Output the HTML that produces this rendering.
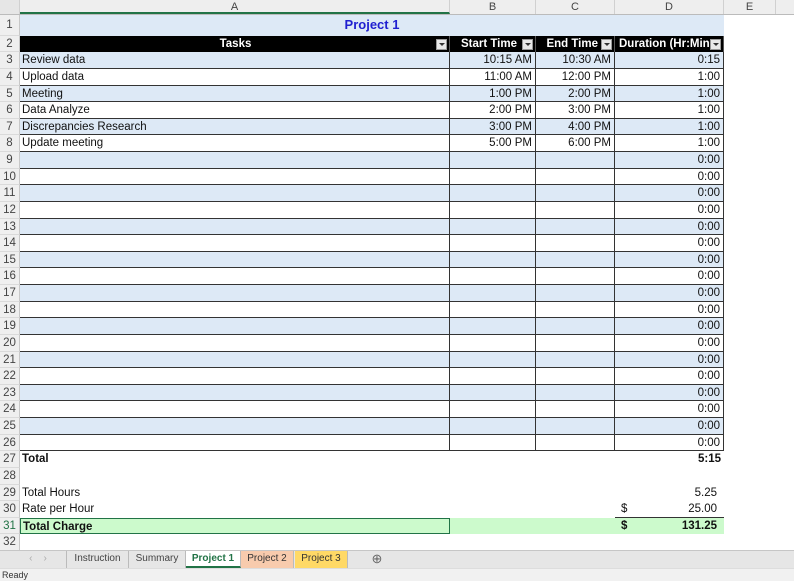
<!DOCTYPE html>
<html><head><style>
*{box-sizing:border-box;margin:0;padding:0}
body{width:794px;height:581px;overflow:hidden;background:#fff;font-family:"Liberation Sans",sans-serif;font-size:11.5px;color:#111;position:relative}
.r{display:flex;height:16.64px;line-height:16px}
.r>div{flex:none;overflow:hidden;white-space:nowrap}
.h{width:20px;background:#efefef;color:#444;text-align:center;border-right:1px solid #c8c8c8;border-bottom:1px solid #dadada;font-size:11.5px}
.a{width:430px;padding-left:2px}
.b{width:86px;text-align:right;padding-right:3px}
.c{width:79px;text-align:right;padding-right:3px}
.d{width:109px;text-align:right;padding-right:3px}
.e{width:52px}
.d2 .a,.d2 .b,.d2 .c,.d2 .d{border-right:1px solid #333;border-bottom:1px solid #333}
.bl .a,.bl .b,.bl .c,.bl .d{background:#dde9f6}
.hdr{height:15px;line-height:15px;background:#eeeeee;color:#444;text-align:center;border-bottom:1px solid #bbb;font-size:11px}
.hdr>div{border-right:1px solid #d0d0d0;text-align:center;padding:0}
.t2 .a,.t2 .b,.t2 .c,.t2 .d{background:#000;color:#fff;font-weight:bold;position:relative;border-right:1px solid #555}
.dd{position:absolute;right:2px;top:3px;width:11px;height:11px;background:#e8e8e8;border:1px solid #999}
.dd:after{content:"";position:absolute;left:2px;top:3px;border-left:3px solid transparent;border-right:3px solid transparent;border-top:3px solid #333}
.tabs{position:absolute;left:0;top:550px;width:794px;height:18px;background:#e6e6e6;border-top:1px solid #c6c6c6}
.tab{position:absolute;top:0;height:17px;line-height:16px;font-size:10px;color:#444;text-align:center;border-right:1px solid #bbb}
.status{position:absolute;left:0;top:568px;width:794px;height:13px;background:#f1f1f1;font-size:9px;color:#333;padding-left:2px;line-height:13px;border-top:1px solid #ddd}
</style></head><body>
<div class="r hdr"><div class="h" style="background:#e6e6e6;border-bottom:none"></div><div class="a" style="border-bottom:2px solid #217346;color:#444">A</div><div class="b">B</div><div class="c">C</div><div class="d">D</div><div class="e">E</div></div>
<div class="r" style="height:20.7px;line-height:20px"><div class="h">1</div><div style="width:704px;background:#dde9f6;text-align:center;color:#1f1fd0;font-weight:bold;font-size:13px">Project 1</div></div>
<div class="r t2" style="line-height:16px"><div class="h">2</div><div class="a" style="text-align:center">Tasks<span class="dd"></span></div><div class="b" style="padding-right:18px">Start Time<span class="dd"></span></div><div class="c" style="padding-right:16px">End Time<span class="dd"></span></div><div class="d" style="padding-right:14px;text-align:left;padding-left:4px">Duration (Hr:Min<span class="dd"></span></div></div>
<div class="r d2 bl"><div class="h">3</div><div class="a">Review data</div><div class="b">10:15 AM</div><div class="c">10:30 AM</div><div class="d">0:15</div></div>
<div class="r d2"><div class="h">4</div><div class="a">Upload data</div><div class="b">11:00 AM</div><div class="c">12:00 PM</div><div class="d">1:00</div></div>
<div class="r d2 bl"><div class="h">5</div><div class="a">Meeting</div><div class="b">1:00 PM</div><div class="c">2:00 PM</div><div class="d">1:00</div></div>
<div class="r d2"><div class="h">6</div><div class="a">Data Analyze</div><div class="b">2:00 PM</div><div class="c">3:00 PM</div><div class="d">1:00</div></div>
<div class="r d2 bl"><div class="h">7</div><div class="a">Discrepancies Research</div><div class="b">3:00 PM</div><div class="c">4:00 PM</div><div class="d">1:00</div></div>
<div class="r d2"><div class="h">8</div><div class="a">Update meeting</div><div class="b">5:00 PM</div><div class="c">6:00 PM</div><div class="d">1:00</div></div>
<div class="r d2 bl"><div class="h">9</div><div class="a"></div><div class="b"></div><div class="c"></div><div class="d">0:00</div></div>
<div class="r d2"><div class="h">10</div><div class="a"></div><div class="b"></div><div class="c"></div><div class="d">0:00</div></div>
<div class="r d2 bl"><div class="h">11</div><div class="a"></div><div class="b"></div><div class="c"></div><div class="d">0:00</div></div>
<div class="r d2"><div class="h">12</div><div class="a"></div><div class="b"></div><div class="c"></div><div class="d">0:00</div></div>
<div class="r d2 bl"><div class="h">13</div><div class="a"></div><div class="b"></div><div class="c"></div><div class="d">0:00</div></div>
<div class="r d2"><div class="h">14</div><div class="a"></div><div class="b"></div><div class="c"></div><div class="d">0:00</div></div>
<div class="r d2 bl"><div class="h">15</div><div class="a"></div><div class="b"></div><div class="c"></div><div class="d">0:00</div></div>
<div class="r d2"><div class="h">16</div><div class="a"></div><div class="b"></div><div class="c"></div><div class="d">0:00</div></div>
<div class="r d2 bl"><div class="h">17</div><div class="a"></div><div class="b"></div><div class="c"></div><div class="d">0:00</div></div>
<div class="r d2"><div class="h">18</div><div class="a"></div><div class="b"></div><div class="c"></div><div class="d">0:00</div></div>
<div class="r d2 bl"><div class="h">19</div><div class="a"></div><div class="b"></div><div class="c"></div><div class="d">0:00</div></div>
<div class="r d2"><div class="h">20</div><div class="a"></div><div class="b"></div><div class="c"></div><div class="d">0:00</div></div>
<div class="r d2 bl"><div class="h">21</div><div class="a"></div><div class="b"></div><div class="c"></div><div class="d">0:00</div></div>
<div class="r d2"><div class="h">22</div><div class="a"></div><div class="b"></div><div class="c"></div><div class="d">0:00</div></div>
<div class="r d2 bl"><div class="h">23</div><div class="a"></div><div class="b"></div><div class="c"></div><div class="d">0:00</div></div>
<div class="r d2"><div class="h">24</div><div class="a"></div><div class="b"></div><div class="c"></div><div class="d">0:00</div></div>
<div class="r d2 bl"><div class="h">25</div><div class="a"></div><div class="b"></div><div class="c"></div><div class="d">0:00</div></div>
<div class="r d2"><div class="h">26</div><div class="a"></div><div class="b"></div><div class="c"></div><div class="d">0:00</div></div>
<div class="r" style="font-weight:bold"><div class="h" style="font-weight:normal">27</div><div class="a">Total</div><div class="b"></div><div class="c"></div><div class="d">5:15</div></div>
<div class="r"><div class="h">28</div></div>
<div class="r"><div class="h">29</div><div class="a">Total Hours</div><div class="b"></div><div class="c"></div><div class="d" style="padding-right:7px">5.25</div></div>
<div class="r"><div class="h">30</div><div class="a">Rate per Hour</div><div class="b"></div><div class="c"></div><div class="d" style="padding-right:7px;border-bottom:1px solid #333;display:flex;justify-content:space-between;padding-left:6px"><span>$</span><span>25.00</span></div></div>
<div class="r" style="font-weight:bold"><div class="h" style="font-weight:normal;color:#217346">31</div><div class="a" style="background:#ccfacc;border:1px solid #217346">Total Charge</div><div class="b" style="background:#ccfacc"></div><div class="c" style="background:#ccfacc"></div><div class="d" style="background:#ccfacc;padding-right:7px;display:flex;justify-content:space-between;padding-left:6px"><span>$</span><span>131.25</span></div></div>
<div class="r"><div class="h">32</div></div>
<div class="tabs">
<div class="tab" style="left:10px;width:56px;border:none;color:#aaa">&#8249;&nbsp;&nbsp;&nbsp;&nbsp;&#8250;</div>
<div class="tab" style="left:66px;width:63px;border-left:1px solid #bbb">Instruction</div>
<div class="tab" style="left:129px;width:57px">Summary</div>
<div class="tab" style="left:186px;width:55px;background:#fff;color:#217346;font-weight:bold;border-bottom:2px solid #217346">Project 1</div>
<div class="tab" style="left:241px;width:53px;background:#f8cbad;color:#333">Project 2</div>
<div class="tab" style="left:295px;width:53px;background:#ffd966;color:#333">Project 3</div>
<div class="tab" style="left:368px;width:18px;border:none;font-size:13px;color:#666">&#8853;</div>
</div>
<div class="status">Ready</div>
</body></html>
